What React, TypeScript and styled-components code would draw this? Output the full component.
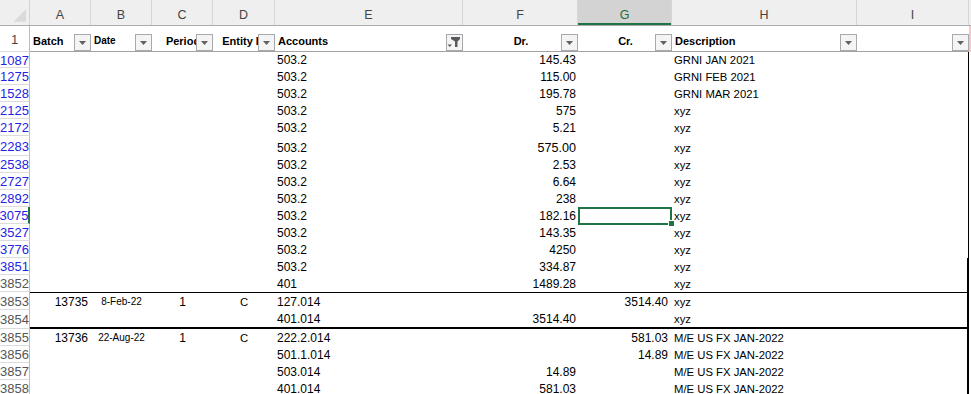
import React from 'react';
import styled, { createGlobalStyle, css } from 'styled-components';

const GlobalStyle = createGlobalStyle`
  html, body {
    margin: 0;
    padding: 0;
    background: #fff;
    overflow: hidden;
  }
`;

type Align = 'left' | 'center' | 'right';

type Col = { key: string; w: number };

const COLS: Col[] = [
  { key: 'A', w: 61 },
  { key: 'B', w: 61 },
  { key: 'C', w: 61 },
  { key: 'D', w: 62 },
  { key: 'E', w: 188 },
  { key: 'F', w: 115 },
  { key: 'G', w: 94 },
  { key: 'H', w: 185 },
  { key: 'I', w: 112 },
];

type Heading = { label: string; align: Align; small?: boolean; filtered?: boolean };

const HEADINGS: Heading[] = [
  { label: 'Batch', align: 'left' },
  { label: 'Date', align: 'left', small: true },
  { label: 'Period', align: 'center' },
  { label: 'Entity ID', align: 'center' },
  { label: 'Accounts', align: 'left', filtered: true },
  { label: 'Dr.', align: 'center' },
  { label: 'Cr.', align: 'center' },
  { label: 'Description', align: 'left' },
  { label: '', align: 'left' },
];

type Entry = {
  n: number;
  h: number;
  acc: string;
  dr?: string;
  cr?: string;
  desc: string;
  batch?: string;
  date?: string;
  period?: string;
  entity?: string;
  filtered?: boolean;
  big?: boolean;
  active?: boolean;
  rule?: 'top' | 'bottom';
  edge?: number;
};

const GRNI = 'M/E US FX JAN-2022';

const ENTRIES: Entry[] = [
  { n: 1087, h: 16, acc: '503.2', dr: '145.43', desc: 'GRNI JAN 2021', filtered: true, edge: 1 },
  { n: 1275, h: 17, acc: '503.2', dr: '115.00', desc: 'GRNI FEB 2021', filtered: true, edge: 1 },
  { n: 1528, h: 17, acc: '503.2', dr: '195.78', desc: 'GRNI MAR 2021', filtered: true, edge: 1 },
  { n: 2125, h: 17, acc: '503.2', dr: '575', desc: 'xyz', filtered: true, edge: 1 },
  { n: 2172, h: 17, acc: '503.2', dr: '5.21', desc: 'xyz', filtered: true, edge: 1 },
  { n: 2283, h: 20, acc: '503.2', dr: '575.00', desc: 'xyz', filtered: true, big: true, edge: 1 },
  { n: 2538, h: 17, acc: '503.2', dr: '2.53', desc: 'xyz', filtered: true, edge: 1 },
  { n: 2727, h: 17, acc: '503.2', dr: '6.64', desc: 'xyz', filtered: true, edge: 1 },
  { n: 2892, h: 17, acc: '503.2', dr: '238', desc: 'xyz', filtered: true, edge: 1 },
  { n: 3075, h: 17, acc: '503.2', dr: '182.16', desc: 'xyz', filtered: true, active: true, edge: 1 },
  { n: 3527, h: 17, acc: '503.2', dr: '143.35', desc: 'xyz', filtered: true, edge: 1 },
  { n: 3776, h: 17, acc: '503.2', dr: '4250', desc: 'xyz', filtered: true, edge: 1 },
  { n: 3851, h: 17, acc: '503.2', dr: '334.87', desc: 'xyz', filtered: true, edge: 2 },
  { n: 3852, h: 17, acc: '401', dr: '1489.28', desc: 'xyz', edge: 2 },
  {
    n: 3853, h: 18, batch: '13735', date: '8-Feb-22', period: '1', entity: 'C',
    acc: '127.014', cr: '3514.40', desc: 'xyz', rule: 'top', edge: 2,
  },
  { n: 3854, h: 19, acc: '401.014', dr: '3514.40', desc: 'xyz', rule: 'bottom', edge: 2 },
  {
    n: 3855, h: 17, batch: '13736', date: '22-Aug-22', period: '1', entity: 'C',
    acc: '222.2.014', cr: '581.03', desc: GRNI, edge: 2,
  },
  { n: 3856, h: 17, acc: '501.1.014', cr: '14.89', desc: GRNI, edge: 2 },
  { n: 3857, h: 17, acc: '503.014', dr: '14.89', desc: GRNI, edge: 2 },
  { n: 3858, h: 17, acc: '401.014', dr: '581.03', desc: GRNI, edge: 2 },
];

const SELECTED_COL = 'G';

function DropArrow() {
  return (
    <svg width="7" height="4" viewBox="0 0 7 4">
      <polygon points="0,0 7,0 3.5,4" fill="#616161" />
    </svg>
  );
}

function FunnelIcon() {
  return (
    <svg width="15" height="15" viewBox="0 0 15 15">
      <polygon points="4,2 13,2 13,4 10.5,6.5 10.5,12 8,12 8,6.5 4,4" fill="#5a5a5a" />
      <polygon points="0.5,9.5 5,9.5 2.75,12" fill="#5a5a5a" />
    </svg>
  );
}

export default function App() {
  return (
    <>
      <GlobalStyle />
      <Sheet>
        <LetterBar>
          <Corner>
            <svg width="30" height="25" viewBox="0 0 30 25">
              <polygon points="27,9 27,22 14,22" fill="#dadada" />
            </svg>
          </Corner>
          {COLS.map((c) => (
            <Letter key={c.key} $w={c.w} $selected={c.key === SELECTED_COL}>
              {c.key}
            </Letter>
          ))}
        </LetterBar>

        <TitleRow>
          <RowNum $color="#444">1</RowNum>
          {COLS.map((c, i) => {
            const hd = HEADINGS[i];
            return (
              <TitleCell key={c.key} $w={c.w} $align={hd.align} $small={hd.small}>
                {hd.label}
                <FilterButton>{hd.filtered ? <FunnelIcon /> : <DropArrow />}</FilterButton>
              </TitleCell>
            );
          })}
          <PinkEdge />
        </TitleRow>

        {ENTRIES.map((e) => (
          <Row key={e.n} $h={e.h}>
            <RowNum $color={e.filtered ? '#2323e6' : '#555'} $active={e.active}>
              {e.n}
            </RowNum>
            <Cells $rule={e.rule}>
              <Cell $w={61} $align="right" $pr={3}>{e.batch}</Cell>
              <Cell $w={61} $align="center" $size={10}>{e.date}</Cell>
              <Cell $w={61} $align="center">{e.period}</Cell>
              <Cell $w={62} $align="center" $size={11.3}>{e.entity}</Cell>
              <Cell $w={188}>{e.acc}</Cell>
              <Cell $w={115} $align="right" $size={e.big ? 12.6 : 12}>{e.dr}</Cell>
              <Cell $w={94} $align="right" $pr={4} $selected={e.active}>{e.cr}</Cell>
              <Cell $w={185} $size={11.3}>{e.desc}</Cell>
              <Cell $w={112} $edge={e.edge} />
            </Cells>
          </Row>
        ))}
      </Sheet>
    </>
  );
}

const Sheet = styled.div`
  width: 971px;
  height: 394px;
  overflow: hidden;
  background: #fff;
  font-family: "Liberation Sans", Arial, sans-serif;
  color: #000;
`;

const LetterBar = styled.div`
  display: flex;
  height: 26px;
  box-sizing: border-box;
  background: #efefef;
  border-bottom: 1px solid #ababab;
`;

const Corner = styled.div`
  width: 30px;
  flex: none;
  border-right: 1px solid #d4d4d4;
  box-sizing: border-box;
  display: flex;
`;

const Letter = styled.div<{ $w: number; $selected?: boolean }>`
  width: ${(p) => p.$w}px;
  flex: none;
  box-sizing: border-box;
  border-right: 1px solid #d6d6d6;
  display: flex;
  align-items: center;
  justify-content: center;
  padding-top: 5px;
  font-size: 12.5px;
  color: #444;
  ${(p) =>
    p.$selected &&
    css`
      background: #d3d3d3;
      color: #1f6b41;
      box-shadow: inset 0 -2px 0 #217346;
    `}
`;

const TitleRow = styled.div`
  display: flex;
  height: 26px;
  box-sizing: border-box;
`;

const RowNum = styled.div<{ $color: string; $active?: boolean }>`
  width: 30px;
  flex: none;
  box-sizing: border-box;
  display: flex;
  align-items: center;
  justify-content: center;
  overflow: hidden;
  font-size: 13px;
  color: ${(p) => p.$color};
  border-right: 1px solid #bdbdbd;
  border-bottom: 1px solid #dcdcdc;
  padding-top: 1px;
  ${(p) =>
    p.$active &&
    css`
      border-right: 2px solid #217346;
    `}
`;

const alignToFlex = (a: Align) =>
  a === 'right' ? 'flex-end' : a === 'center' ? 'center' : 'flex-start';

const TitleCell = styled.div<{ $w: number; $align: Align; $small?: boolean }>`
  position: relative;
  width: ${(p) => p.$w}px;
  flex: none;
  box-sizing: border-box;
  display: flex;
  align-items: flex-end;
  justify-content: ${(p) => alignToFlex(p.$align)};
  padding: 0 2px 3px 3px;
  border-bottom: 1px solid #a3a3a3;
  font-weight: bold;
  font-size: ${(p) => (p.$small ? 10 : 11)}px;
  line-height: 14px;
  white-space: nowrap;
  overflow: hidden;
`;

const FilterButton = styled.div`
  position: absolute;
  right: 0;
  bottom: 0;
  width: 17px;
  height: 17px;
  box-sizing: border-box;
  border: 1px solid #a6a9ad;
  background: #f4f4f4;
  display: flex;
  align-items: center;
  justify-content: center;
`;

const PinkEdge = styled.div`
  width: 2px;
  flex: none;
  background: #f7c6cd;
`;

const Row = styled.div<{ $h: number }>`
  display: flex;
  height: ${(p) => p.$h}px;
`;

const Cells = styled.div<{ $rule?: 'top' | 'bottom' }>`
  display: flex;
  width: 939px;
  flex: none;
  box-sizing: border-box;
  ${(p) => p.$rule === 'top' && css`border-top: 1px solid #000;`}
  ${(p) => p.$rule === 'bottom' && css`border-bottom: 2px solid #000;`}
`;

const Cell = styled.div<{
  $w: number;
  $align?: Align;
  $size?: number;
  $pr?: number;
  $edge?: number;
  $selected?: boolean;
}>`
  position: relative;
  width: ${(p) => p.$w}px;
  flex: none;
  box-sizing: border-box;
  display: flex;
  align-items: flex-end;
  justify-content: ${(p) => alignToFlex(p.$align || 'left')};
  padding: 0 ${(p) => p.$pr ?? 2}px 1px 2px;
  font-size: ${(p) => p.$size ?? 12}px;
  line-height: 14px;
  white-space: nowrap;
  ${(p) => p.$edge && css`border-right: ${p.$edge}px solid #000;`}
  ${(p) =>
    p.$selected &&
    css`
      &::before {
        content: '';
        position: absolute;
        left: 0;
        top: 0;
        right: 0;
        bottom: -1px;
        border: 2px solid #217346;
        z-index: 2;
      }
      &::after {
        content: '';
        position: absolute;
        right: -3px;
        bottom: -3px;
        width: 5px;
        height: 5px;
        background: #217346;
        border: 1px solid #fff;
        z-index: 3;
      }
    `}
`;
